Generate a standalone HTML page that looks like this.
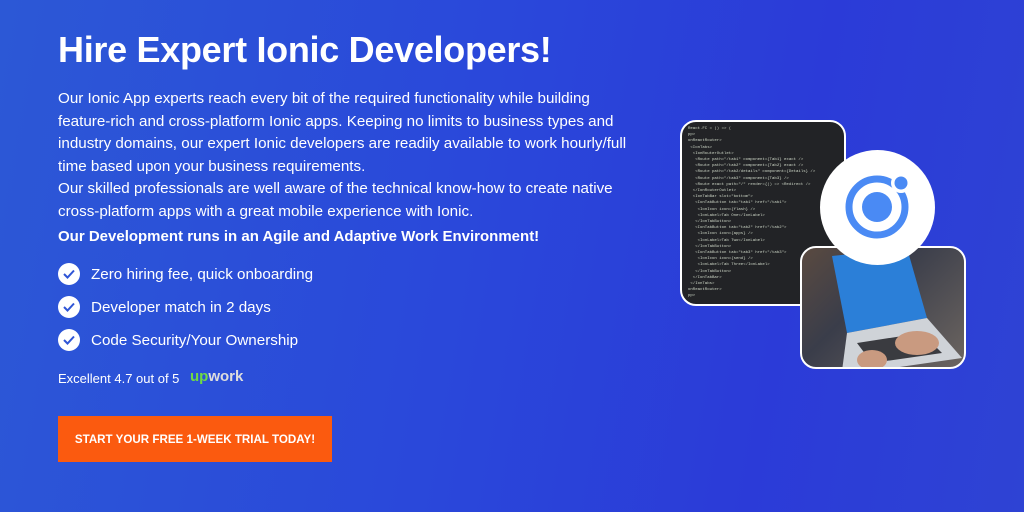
<!DOCTYPE html>
<html><head><meta charset="utf-8"><style>
*{margin:0;padding:0;box-sizing:border-box}
body{width:1024px;height:512px;overflow:hidden;font-family:"Liberation Sans",sans-serif;color:#fff;
background:linear-gradient(100deg,#2c58d6 0%,#2a48da 45%,#2b3bd8 75%,#2e43d4 100%);position:relative}
h1{position:absolute;left:58px;top:29px;font-size:36px;font-weight:bold;letter-spacing:-0.3px}
.p{position:absolute;left:58px;top:88px;width:580px;font-size:15.2px;line-height:22.5px}
.h{position:absolute;left:58px;top:228px;font-size:15px;font-weight:bold}
.li{position:absolute;left:58px;font-size:15.2px;display:flex;align-items:center}
.li i{width:22px;height:22px;border-radius:50%;background:#fff;margin-right:11px;display:flex;align-items:center;justify-content:center}
.rate{position:absolute;left:58px;top:371px;font-size:13px}
.up{position:absolute;left:190px;top:368px;font-size:15px;font-weight:bold}
.btn{position:absolute;left:58px;top:416px;width:274px;height:46px;background:#fb5a0f;font-size:11.6px;font-weight:bold;display:flex;align-items:center;justify-content:center}
.code{position:absolute;left:680px;top:120px;width:166px;height:186px;background:#222326;border:2px solid #fff;border-radius:16px;overflow:hidden;padding:4px 6px;font:4px "Liberation Mono",monospace;color:#cfd8c8;line-height:6.2px;white-space:pre}
.photo{position:absolute;left:800px;top:246px;width:166px;height:123px;border:2px solid #fff;border-radius:16px;overflow:hidden;background:linear-gradient(135deg,#5a4a40 0%,#3a3d4a 40%,#6c6560 100%)}
.ion{position:absolute;left:820px;top:150px;width:115px;height:115px;border-radius:50%;background:#fff}
</style></head><body>
<h1>Hire Expert Ionic Developers!</h1>
<div class="p">Our Ionic App experts reach every bit of the required functionality while building feature-rich and cross-platform Ionic apps. Keeping no limits to business types and industry domains, our expert Ionic developers are readily available to work hourly/full time based upon your business requirements.<br>Our skilled professionals are well aware of the technical know-how to create native cross-platform apps with a great mobile experience with Ionic.</div>
<div class="h">Our Development runs in an Agile and Adaptive Work Environment!</div>
<div class="li" style="top:263px"><i><svg width="12" height="10"><path d="M1 5l3.5 3.5L11 1.5" stroke="#2f55d6" stroke-width="2" fill="none"/></svg></i>Zero hiring fee, quick onboarding</div>
<div class="li" style="top:296px"><i><svg width="12" height="10"><path d="M1 5l3.5 3.5L11 1.5" stroke="#2f55d6" stroke-width="2" fill="none"/></svg></i>Developer match in 2 days</div>
<div class="li" style="top:329px"><i><svg width="12" height="10"><path d="M1 5l3.5 3.5L11 1.5" stroke="#2f55d6" stroke-width="2" fill="none"/></svg></i>Code Security/Your Ownership</div>
<div class="rate">Excellent 4.7 out of 5</div>
<div class="up"><span style="color:#6fda44">up</span><span style="color:#ddd">work</span></div>
<div class="btn">START YOUR FREE 1-WEEK TRIAL TODAY!</div>
<div class="code">React.FC = () =&gt; (
pp&gt;
onReactRouter&gt;
 &lt;IonTabs&gt;
  &lt;IonRouterOutlet&gt;
   &lt;Route path="/tab1" component={Tab1} exact /&gt;
   &lt;Route path="/tab2" component={Tab2} exact /&gt;
   &lt;Route path="/tab2/details" component={Details} /&gt;
   &lt;Route path="/tab3" component={Tab3} /&gt;
   &lt;Route exact path="/" render={() =&gt; &lt;Redirect /&gt;
  &lt;/IonRouterOutlet&gt;
  &lt;IonTabBar slot="bottom"&gt;
   &lt;IonTabButton tab="tab1" href="/tab1"&gt;
    &lt;IonIcon icon={flash} /&gt;
    &lt;IonLabel&gt;Tab One&lt;/IonLabel&gt;
   &lt;/IonTabButton&gt;
   &lt;IonTabButton tab="tab2" href="/tab2"&gt;
    &lt;IonIcon icon={apps} /&gt;
    &lt;IonLabel&gt;Tab Two&lt;/IonLabel&gt;
   &lt;/IonTabButton&gt;
   &lt;IonTabButton tab="tab3" href="/tab3"&gt;
    &lt;IonIcon icon={send} /&gt;
    &lt;IonLabel&gt;Tab Three&lt;/IonLabel&gt;
   &lt;/IonTabButton&gt;
  &lt;/IonTabBar&gt;
 &lt;/IonTabs&gt;
onReactRouter&gt;
pp&gt;</div>
<div class="photo"><svg width="166" height="123">
<polygon points="30,8 105,0 125,70 45,85" fill="#2b7fd8"/>
<polygon points="45,85 125,70 160,110 70,123 40,123" fill="#cfd3d8"/>
<polygon points="55,95 120,85 140,105 70,115" fill="#3a3b40"/>
<ellipse cx="115" cy="95" rx="22" ry="12" fill="#c99a80"/>
<ellipse cx="70" cy="112" rx="15" ry="10" fill="#c99a80"/>
</svg></div>
<div class="ion"><svg width="115" height="115"><circle cx="57" cy="57" r="28" fill="none" stroke="#4a8af4" stroke-width="7"/><circle cx="57" cy="57" r="15" fill="#4a8af4"/><circle cx="81" cy="33" r="10" fill="#fff"/><circle cx="81" cy="33" r="6.5" fill="#4a8af4"/></svg></div>
</body></html>
